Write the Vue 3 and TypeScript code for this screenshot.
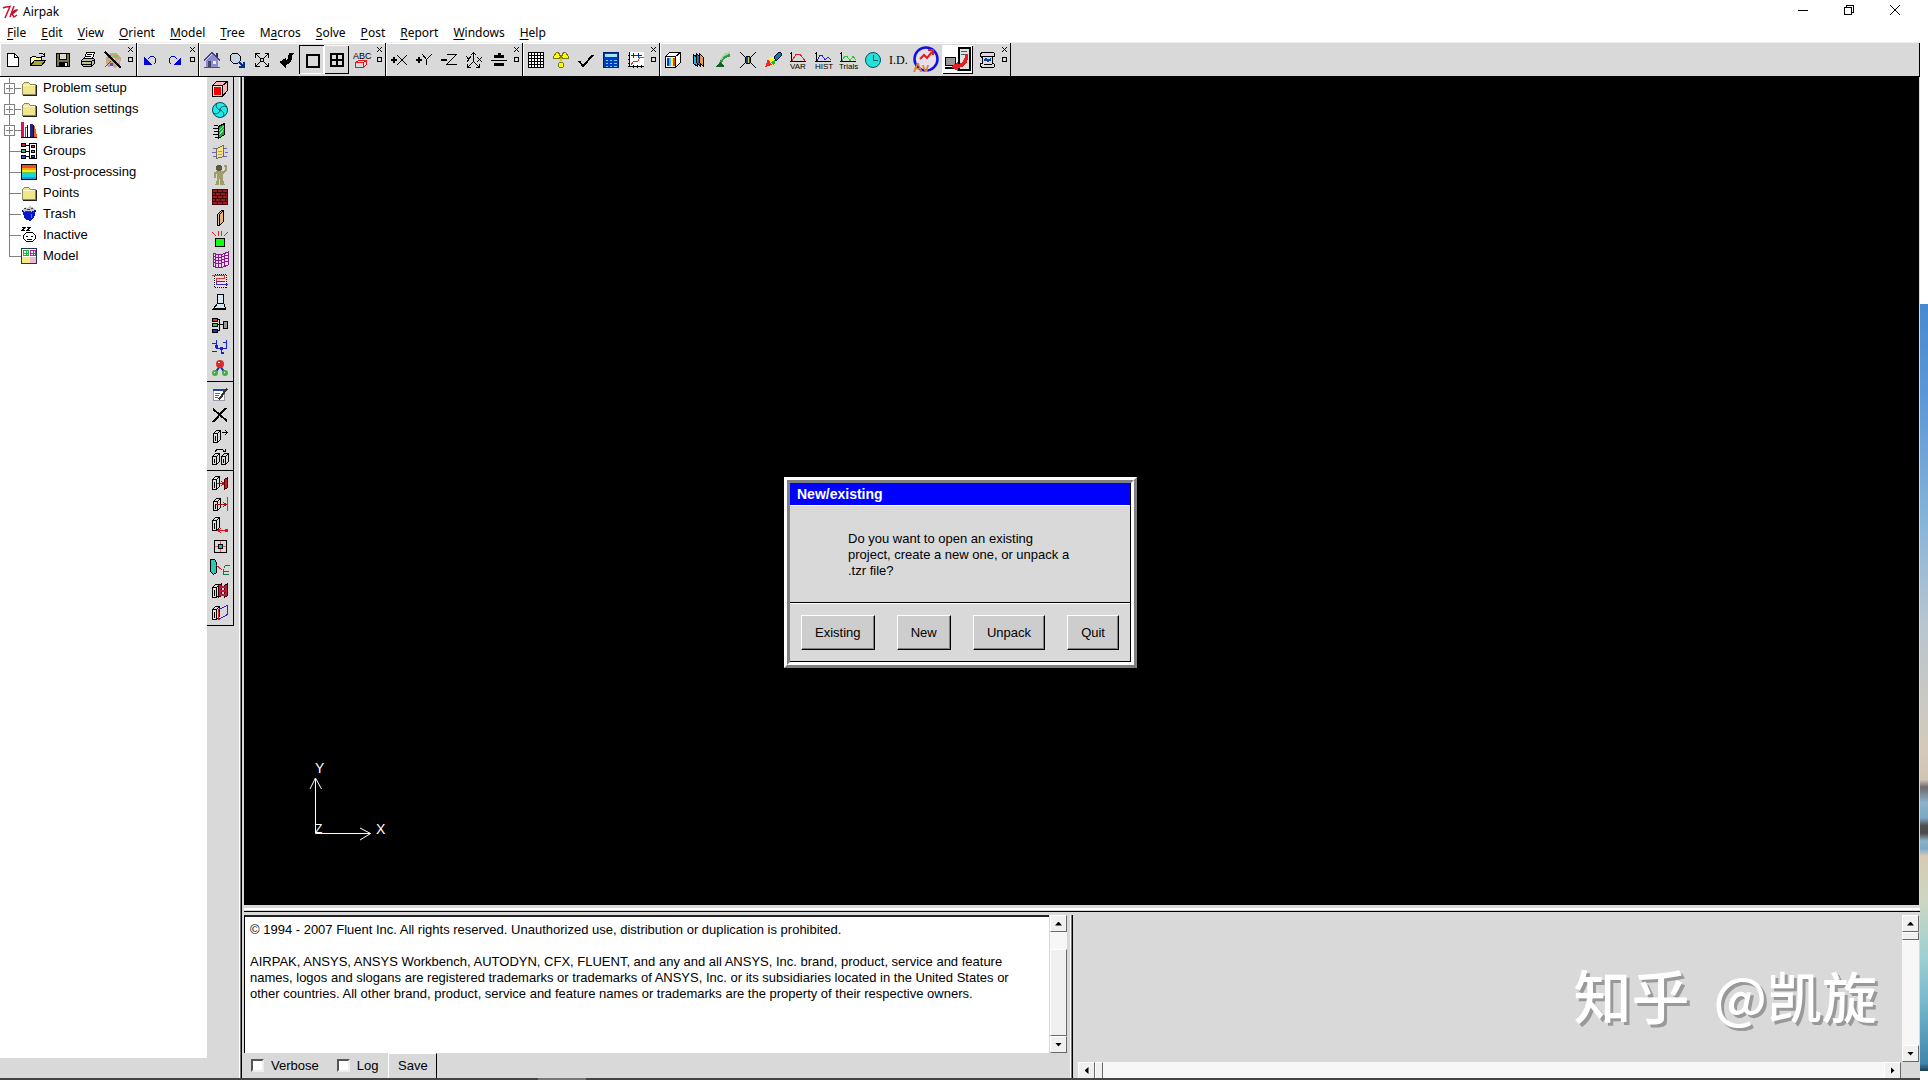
<script setup lang="ts">
import { ref } from 'vue'

interface Tool {
  icon: string
  label: string
  kind?: 'sunken' | 'raised' | 'logo' | 'device'
}

interface TreeNode {
  icon: string
  label: string
  expandable?: boolean
}

interface SideTool {
  icon: string
  label: string
  tall?: boolean
}

const cabinet = (x: number, y: number, w: number, h: number): string =>
  `<path d="M${x}.5 ${y + 3}.5l3 -3h${w - 5}v${h - 4}l-3 3h-${w - 5}z" fill="#ddd" stroke="#000"/><path d="M${x}.5 ${y + 3}.5h${w - 5}v${h - 4}M${x + w - 5}.5 ${y + 3}.5l3 -3" fill="none" stroke="#000"/><path d="M${x + 2}.5 ${y + 6}v${h - 8}" stroke="#000"/>`

const icons: Record<string, string> = {
  page: '<path d="M2.500 1.500h7l4 4v9h-11z" fill="#fff" stroke="#000"/><path d="M9.500 1.500v4h4" fill="none" stroke="#000"/>',
  open: '<path d="M.5 13.500v-8h1l1-1h3l1 1h5v3" fill="#ffff99" stroke="#000"/><path d="M.5 13.500l4-5h11l-4 5z" fill="#a5a534" stroke="#000"/><path d="M8.500 2.500l1-1h3l2 2M14.500 1v3.500h-4" fill="none" stroke="#000"/>',
  save: '<path d="M1.500 1.500h13v13h-13z" fill="#77773c" stroke="#000"/><path d="M4.500 1.500h7v6h-7z" fill="#d9d9d9" stroke="#000"/><path d="M4 10h9v5H4z" fill="#000"/><path d="M10 11h2v3h-2z" fill="#eee"/>',
  print: '<path d="M4.500 6.500l2-6h8l-2 6" fill="#fff" stroke="#000"/><path d="M7 2.500h5M6 4.500h5" stroke="#000"/><path d="M1.500 8.500l2-2h10l1 1v4l-3 3h-8l-2-2z" fill="#bbb" stroke="#000"/><path d="M1 9.500h10.500v5M11.500 9.500l3-2M2 12.500h9" fill="none" stroke="#000"/><path d="M8 10h2v1H8z" fill="#cc0"/>',
  palette: '<path d="M1 5l4-4h7l4 5-1 7-5 3-3-2-4 1-2-4z" fill="#c8ab7c"/><path d="M3 3h3v3H3z" fill="#e22"/><path d="M9 3h4v3H9z" fill="#6c6"/><path d="M11 8h4v3h-4z" fill="#d6b1d0"/><path d="M5 11h3v3H5z" fill="#54c"/><path d="M7 6h3v3H7z" fill="#ed5"/><path d="M0 0l16 16" stroke="#000" stroke-width="1.500"/><path d="M0 15l6-6" stroke="#a33"/>',
  undo: '<path d="M2 5v8h8z" fill="#0000dc"/><path d="M5.500 7.500l3-3h3l2 2v4l-2 2" fill="none" stroke="#0000dc"/>',
  redo: '<path d="M14 5v8H6z" fill="#0000dc"/><path d="M10.500 7.500l-3-3h-3l-2 2v4l2 2" fill="none" stroke="#0000dc"/>',
  home: '<path d="M2 8v7h12V8L8 2z" fill="#8b8bd0"/><path d="M0 8.500l8-8 8 8" fill="none" stroke="#44447a" stroke-width="2"/><path d="M12 1h2v4h-2z" fill="#334"/><path d="M4 9h3v6H4z" fill="#446"/><path d="M9 9h3v3H9z" fill="#eef"/><path d="M0 15.500h16" stroke="#464"/>',
  zoom: '<path d="M3.500 1.500h5l3 3v4l-3 3h-4l-3-3v-5z" fill="#c9d4e2" stroke="#000"/><path d="M10 10l5 5M15 10v5h-5" fill="none" stroke="#003080" stroke-width="2"/>',
  fit: '<path d="M1.500 5.500v-4h4M10.500 1.500h4v4M14.500 10.500v4h-4M5.500 14.500h-4v-4M2 2l4 4M14 2l-4 4M14 14l-4-4M2 14l4-4" fill="none" stroke="#000"/><path d="M6.500 6.500h3v3h-3z" fill="none" stroke="#000"/>',
  rotate: '<path d="M16 1c-2 0-3 1-3 3 0 5-2 8-6 9v3L0 10l7-4v3c2-1 2-3 2-5 0-3 3-4 7-3z" fill="#000"/>',
  single: '<path d="M3 3h12v12H3z" fill="none" stroke="#000" stroke-width="2"/>',
  quad: '<path d="M2 2h12v12H2zM8 2v12M2 8h12" fill="none" stroke="#000" stroke-width="2"/>',
  abc: '<text x="-1" y="7" font-family="Liberation Sans" font-size="9">ABC</text><path d="M1.500 10.500h8v5h-8zM1.500 10.500l3-2h8l-3 2M12.500 8.500v4l-3 3" fill="none" stroke="#e01818"/>',
  px: '<path d="M0 8h6M3 5v6" stroke="#000" stroke-width="2"/><path d="M6 3l10 10M16 3L6 13" stroke="#000"/>',
  py: '<path d="M0 8h6M3 5v6" stroke="#000" stroke-width="2"/><path d="M6.500 2.500l4 5v5M15.500 2.500l-5 5" fill="none" stroke="#000"/>',
  mz: '<path d="M0 8h6" stroke="#000" stroke-width="2"/><path d="M6 2.500h9.500l-10 10H16" fill="none" stroke="#000"/>',
  iso: '<path d="M7.500 9.500v-9M5 3l2.500-2.500L10 3M7.500 9.500l6 6M13.500 12v3.500H10M7.500 9.500l-6 6M1.500 12v3.500H5M0 4l2.500 3M5 4L1 10M11 5l5 5M16 5l-5 5" fill="none" stroke="#000"/>',
  flip: '<path d="M0 8.500h16" stroke="#000"/><path d="M3 3h4V1h3v2h3v3H3zM3 11h10v3H3z" fill="#000"/>',
  grid: '<path d="M0 0h16v16H0z" fill="#fff"/><path d="M.5.5h15v15H.5zM3.500 0v16M6.500 0v16M9.500 0v16M12.500 0v16M0 3.500h16M0 6.500h16M0 9.500h16M0 12.500h16" fill="none" stroke="#000"/>',
  radiation: '<path d="M.5 6.500v-2l3-4h2l2 4-1 2zM15.500 6.500v-2l-3-4h-2l-2 4 1 2zM5.500 14.500v-3l1-1h3l1 1v3l-1 1h-3z" fill="#ff0" stroke="#77771a"/><path d="M7 6h2v3H7z" fill="#cc0"/>',
  check: '<path d="M1 9l4 5L15 3" fill="none" stroke="#000" stroke-width="2"/>',
  calc: '<path d="M.5.5h15v15H.5z" fill="#003cbd" stroke="#001e70"/><path d="M2 2h12v3H2z" fill="#9fe6ff"/><path d="M3 8h2M7 8h2M3 11h2M7 11h2M3 14h2M7 14h2M11 14h3M11 11h3M11 8h3" stroke="#65dcff"/>',
  chart: '<path d="M1 0h15v15H1z" fill="#fff"/><path d="M1.500 0v15M0 14.500h16M0 3.500h2M0 7.500h2M0 11.500h2M5.500 13v3M9.500 13v3M13.500 13v3" stroke="#000"/><path d="M3 13l3-4h4l2-4h4" fill="none" stroke="#e32"/><path d="M3 3.500h11M5.500 1v5M10.500 1v5" stroke="#0029a8"/>',
  spectrum: '<path d="M.5 4.500l4-4h11v10l-5 5H.5z" fill="#fff" stroke="#000"/><path d="M.5 4.500h10v11M10.500 4.500l5-4" fill="none" stroke="#000"/><path d="M2 6h2v8H2z" fill="#13c"/><path d="M4 6h2v8H4z" fill="#37c6e9"/><path d="M6 6h2v8H6z" fill="#ff0"/><path d="M8 6h2v8H8z" fill="#f30"/>',
  planes: '<path d="M3.500 2.500l4 3v9l-4-3z" fill="#2ab5ce" stroke="#000"/><path d="M6.500 1.500l4 4v9l-4-4z" fill="#3a63c3" stroke="#000"/><path d="M9.500 1.500l4 4v9l-4-4z" fill="#eb9d43" stroke="#000"/>',
  particle: '<path d="M4 11C5 6 8 3 15 1v4c-4 0-7 2-8 6z" fill="#2f9b46"/><path d="M15 1c-5 1-8 3-9 7" fill="none" stroke="#a4d3a6" stroke-width="2"/><path d="M1 15l4-5 5 4-3 1z" fill="#106026"/>',
  probe: '<path d="M0 0l6 6M16 0l-6 6M0 16l6-6M16 16l-6-6" stroke="#000"/><path d="M6.500 4.500h3l1 1v5l-1 1h-3l-1-1v-5z" fill="#1a4080" stroke="#000"/><path d="M8 5h1v6H8z" fill="#cfe146"/>',
  paint: '<path d="M0 15l3-8 4 6z" fill="#f22"/><path d="M4 6l5-2 3 4-5 5z" fill="#ff2"/><path d="M6 10l4-2v4l-2 1z" fill="#1b3"/><path d="M9 5l5-5 2 1v3l-5 5z" fill="#157c8c" stroke="#004"/>',
  var: '<path d="M1.500 0v10M0 9.500h16M0 1.500h2" stroke="#000"/><path d="M2 9l4-7h4l5 7" fill="none" stroke="#d22"/><text x="0" y="17" font-family="Liberation Sans" font-size="8">VAR</text>',
  hist: '<path d="M1.500 0v10M0 9.500h16M0 1.500h2" stroke="#000"/><path d="M2 9l3-6h2l3 5 3-3 3 3" fill="none" stroke="#22d"/><text x="0" y="17" font-family="Liberation Sans" font-size="8">HIST</text>',
  trials: '<path d="M1.500 0v10M0 9.500h16M0 1.500h2" stroke="#000"/><path d="M2 9l3-5h2l3 5 3-5 3 4" fill="none" stroke="#2dc83b"/><text x="-1" y="17" font-family="Liberation Sans" font-size="8">Trials</text>',
  clock: '<circle cx="8" cy="8" r="7.500" fill="#27e0dc" stroke="#055"/><path d="M8.500 3v5.500H13" fill="none" stroke="#055"/>',
  id: '<text x="-1" y="12" font-family="Liberation Serif" font-size="12">I.D.</text>',
  airflow: '<circle cx="15" cy="14" r="11.500" fill="#e7e0e9" stroke="#1111e5" stroke-width="2.500"/><path d="M9 14l4-4 3 3 5-6M22 10V5h-5" fill="none" stroke="#e11e1e" stroke-width="2"/><text x="2" y="27" font-family="Liberation Sans" font-weight="bold" font-size="13" fill="#d9803f">Av</text>',
  device: '<path d="M15.500 2.500h11v22h-11z" fill="#d9e6e3" stroke="#000" stroke-width="2"/><path d="M18 6.500h6M18 9.500h6" stroke="#555"/><path d="M2.500 12.500h10v8h-10z" fill="#999" stroke="#000"/><path d="M2 23h10" stroke="#000" stroke-width="2"/><path d="M22 9h3c1 8-3 14-10 14v3l-7-4 7-5v2c4 0 7-4 7-10z" fill="#e51e20"/>',
  script: '<path d="M3.500.5h11l1 1v3h-2v7h1l1 1v2l-1 1h-11l-2-1v-3h2v-6l-2-1v-3z" fill="#ddd" stroke="#000"/><path d="M3 4.500h10M5 12.500h8" stroke="#000"/><path d="M5 9l2-2 2 2 3-2" fill="none" stroke="#14a" stroke-width="2"/>',
  folder: '<path d="M1.500 4.500l2-2h4l2 2h5v10h-13z" fill="#f0e68c" stroke="#8d875a"/><path d="M2 5.500h12" stroke="#fffbd0"/><path d="M15.500 5v10.500H2" fill="none" stroke="#222"/>',
  books: '<path d="M0 0h3v16H0z" fill="#e0105a"/><path d="M4 5h2v10H4z" fill="#fff" stroke="#b12745"/><path d="M7 3h2v12H7z" fill="#fff"/><path d="M9 2h3v13H9z" fill="#228"/><path d="M12 3l2 1 2 11h-3z" fill="#e86020"/><path d="M6.500 3v12M12.500 3v12M0 15.500h16" stroke="#200"/>',
  groups: '<path d="M8.500 15.500v-15h7v15zM5 2.500h4M5 8.500h4M5 13.500h4" fill="none" stroke="#000"/><path d="M.5.5h4v3h-4z" fill="#c24" stroke="#000"/><path d="M.5 6.500h4v3h-4z" fill="#3b8" stroke="#000"/><path d="M.5 12.500h4v3h-4z" fill="#35c" stroke="#000"/><path d="M10.500 2.500h3v2h-3z" fill="#c24" stroke="#000"/><path d="M10.500 7.500h3v2h-3z" fill="#3b8" stroke="#000"/><path d="M10.500 12.500h3v2h-3z" fill="#35c" stroke="#000"/>',
  rainbow: '<path d="M0 0h16v16H0z"/><path d="M1 1h14v3H1z" fill="#f04b28"/><path d="M1 4h14v2H1z" fill="#f9a51a"/><path d="M1 6h14v2H1z" fill="#f5e91e"/><path d="M1 8h14v2H1z" fill="#65ca40"/><path d="M1 10h14v3H1z" fill="#18d5e4"/><path d="M1 13h14v2H1z" fill="#199be8"/>',
  trash: '<path d="M1 4h14l-2 8-4 3-5-2z" fill="#0716cf"/><path d="M1 4l3-3 2 1 2-2 3 1 3 3-4 2H4z" fill="#c4c4c4"/><path d="M3 2.500h2M6 3.500h3M10 2.500h2M4 5.500h6" stroke="#444"/><path d="M10.500 8v4" stroke="#4a78ff"/>',
  sleep: '<path d="M5.500 5.500h6l3 3v3l-3 3h-6l-3-3v-3z" fill="#fff" stroke="#000"/><path d="M1 .5h3L1 3.500h3M6 .5h3L6 3.500h3M5 9.500h2M10 9.500h2M6 12.500h5" fill="none" stroke="#000"/>',
  model: '<path d="M.5.5h15v15H.5z" fill="#fff" stroke="#235"/><path d="M1 9h8v6H1z" fill="#f4ea7e"/><path d="M9 9h6v6H9z" fill="#f5b6ce"/><circle cx="5" cy="5" r="3" fill="#e0ffe2" stroke="#1bb633"/><path d="M3 5.500h4M5.500 3v4" stroke="#1bb633"/><path d="M9.500 2.500h5v5h-5zM12.500 2v6M10 5.500h5" fill="#fff" stroke="#b01dc1"/>',
  block: '<path d="M.5 4.500l4-4h11v9l-5 6H.5z" fill="#f9b6b6" stroke="#000"/><path d="M.5 4.500h10v11H.5zM10.500 4.500l5-4" fill="#ddd" stroke="#000"/><path d="M2 6h7v8H2z" fill="#f00000"/>',
  fan: '<circle cx="8" cy="8" r="7.500" fill="#1deced" stroke="#064b50"/><path d="M8 8C5 7 3 4 5 1M8 8c0-3 4-5 7-3M8 8c3 1 5 4 3 7M8 8c0 3-4 5-7 3" fill="none" stroke="#064b50"/>',
  vent: '<path d="M6.500 3.500l6-3v11l-6 4z" fill="#20a43b" stroke="#000"/><path d="M7 8l5-5M7 12l5-6" stroke="#8e8"/><path d="M2 2.500h4M1 5.500h6M2 8.500h5M1 11.500h6M3 14.500h4" stroke="#000"/>',
  opening: '<path d="M4.500 4.500l7-3v11l-7 2z" fill="#f3e585" stroke="#765"/><path d="M1 4.500h3M0 8.500h4M1 12.500h3M12 4.500h3M13 8.500h3M12 12.500h3" stroke="#6b65bd"/><path d="M6 7.500h4M6 10.500h4" stroke="#a98"/>',
  person: '<circle cx="7" cy="1" r="3" fill="#5c5939"/><path d="M5 4h6l2-2-1-4h3v6l-4 3v4l1 6h1v1H8v-6H7v6H3v-1h1l1-6V7H4v4H2V5z" fill="#a09c6c"/>',
  wall: '<path d="M0 0h16v16H0z" fill="#9b1d20"/><path d="M0 .5h16M0 3.500h16M0 6.500h16M0 9.500h16M0 12.500h16M0 15.500h16M.5 0v16M15.500 0v16M5.500 0v3M10.500 0v3M3.500 3v3M8.500 3v3M13 3v3M5.500 6v3M10.500 6v3M3.500 9v3M8.500 9v3M13 9v3M5.500 12v3M10.500 12v3" stroke="#3a0a0c"/>',
  plate: '<path d="M5.500 4.500l4-4h2v11l-4 4h-2z" fill="#d5cca5" stroke="#000"/><path d="M7.500 4.500l4-4v11l-4 4z" fill="#f4b568" stroke="#000"/>',
  source: '<path d="M3.500 7.500h9v8h-9z" fill="#1f1" stroke="#000"/><path d="M6.500 0v5M9.500 0v5M0 1l4 4M16 1l-4 4" stroke="#e32222"/>',
  mesh: '<path d="M1 1l5 2 5-1 5-2v13l-5 2-5 1-5-2z" fill="#ecd7ee" stroke="#87178f"/><path d="M3.500 2v13M6.500 3v12M9.500 3v12M12.500 1v14M1 4l5 2 10-3M1 7l5 2 10-3M1 10l5 2 10-3" fill="none" stroke="#87178f"/>',
  exchanger: '<path d="M2.500 1.500h12v13h-12z" fill="#f6dcdc" stroke="#000" stroke-dasharray="1 1"/><path d="M0 2.500h12.500v3h-8v3h8" fill="none" stroke="#df3636"/><path d="M12.500 8.500h-8v3H16" fill="none" stroke="#3a2bcf"/>',
  hood: '<path d="M5.500.5h6v8l2 6H1.500l4-5z" fill="#d5ebf3" stroke="#000"/><path d="M5.500 9.500h6v-8M0 15.500h14" fill="none" stroke="#000"/>',
  network: '<path d="M5 2.500h2.500v11H5M5 7.500h6" fill="none" stroke="#000"/><path d="M.5 1.500h5v3h-5z" fill="#d33" stroke="#000"/><path d="M.5 6.500h5v3h-5z" fill="#3c5" stroke="#000"/><path d="M.5 12.500h5v3h-5z" fill="#239" stroke="#000"/><path d="M11.500 4.500h4v7h-4z" fill="#999" stroke="#000"/>',
  wiring: '<path d="M0 4.500h4.500v5H14M4.500 1v4M9.500 9v6M14.500 1v9M0 12.500h5M11 3.500h4" fill="none" stroke="#1723d3"/><path d="M3 6h3v3H3zM8 8h3v3H8zM9 13h3v2H9z" fill="#1723d3"/>',
  assembly: '<path d="M8 6l-5 7M8 6l5 7" stroke="#1a2c9b" stroke-width="2"/><circle cx="8" cy="4" r="4" fill="#dc2929"/><circle cx="3" cy="13" r="3" fill="#3db344"/><circle cx="13" cy="13" r="3" fill="#3db344"/><path d="M6 2.500h2M2 12.500h1M12 12.500h1" stroke="#fff"/>',
  edit: '<path d="M1.500 3.500h11v11h-11z" fill="#fff" stroke="#99a"/><path d="M1 4h12" stroke="#25459b" stroke-width="2"/><path d="M3 7.500h5M3 9.500h4M3 11.500h3" stroke="#667"/><path d="M6 13l8-11 2 1-8 11z" fill="#333"/>',
  remove: '<path d="M1 2l14 12M14 1L1 15" stroke="#000" stroke-width="2"/>',
  move: cabinet(1, 2, 9, 13) + '<path d="M10 4.500h6M13 2l2.500 2.500L13 7" fill="none" stroke="#000"/>',
  copy: cabinet(0, 4, 9, 12) + cabinet(9, 4, 9, 12) + '<path d="M3 2.500l2-2h5l3 2M13.500 0v2.500H11" fill="none" stroke="#000"/>',
  alignface: cabinet(0, 1, 9, 14) + '<path d="M12.500 4.500l3-2v10l-3 2z" fill="#c02020" stroke="#500"/><path d="M5 8.500h7M9 6l3 2.500L9 11" fill="none" stroke="#a11"/>',
  alignedge: cabinet(1, 2, 9, 13) + '<path d="M15.500 1v14" stroke="#e22"/><path d="M4 8.500h10M11 6l3 2.500-3 2.500" fill="none" stroke="#a11"/>',
  alignvertex: cabinet(0, 0, 9, 14) + '<path d="M6 13.500h8M9 11l-3 2.500L9 16" stroke="#d11" fill="none"/><path d="M13 12h3v3h-3z" fill="#d11"/>',
  center: '<path d="M2.500 2.500h12v12h-12z" fill="none" stroke="#000"/><path d="M8.500 3v11M3 8.500h11" stroke="#e55"/><path d="M6.500 6.500h4v4h-4z" fill="#21bcb8" stroke="#000"/>',
  match: '<path d="M-1.500.5h4l2 3v10l-3 2-3-3z" fill="#2cc7b5" stroke="#000"/><path d="M4 6l6 5M6 7l3 3" stroke="#e22"/><path d="M11.500 9.500l2-3h4M11.500 9.500v6h5M12 12.500h5" fill="none" stroke="#174"/>',
  morphface: cabinet(0, 2, 9, 14) + '<path d="M6.500 3.500l3-2v12l-3 2zM12.500 3.500l3-2v12l-3 2z" fill="#bf1845" stroke="#300"/><path d="M9 4.500h4M9 8.500h4M9 12.500h4" stroke="#bf1845" stroke-width="2"/>',
  morphedge: cabinet(0, 2, 9, 14) + '<path d="M6.500 5.500l9-4v9l-9 5z" fill="none" stroke="#2b24cc"/><path d="M6.500 6v9" stroke="#e22"/>',
}

const menus: string[] = [
  'File', 'Edit', 'View', 'Orient', 'Model', 'Tree', 'Macros', 'Solve', 'Post', 'Report', 'Windows', 'Help',
]
const mnemonics: Record<string, number> = { Macros: 1 }
const splitLabel = (label: string): [string, string, string] => {
  const at = mnemonics[label] ?? 0
  return [label.slice(0, at), label[at], label.slice(at + 1)]
}

const toolGroups: Tool[][] = [
  [
    { icon: 'page', label: 'New project' },
    { icon: 'open', label: 'Open project' },
    { icon: 'save', label: 'Save project' },
    { icon: 'print', label: 'Print screen' },
    { icon: 'palette', label: 'Create image file' },
  ],
  [
    { icon: 'undo', label: 'Undo' },
    { icon: 'redo', label: 'Redo' },
  ],
  [
    { icon: 'home', label: 'Home position' },
    { icon: 'zoom', label: 'Zoom in' },
    { icon: 'fit', label: 'Scale to fit' },
    { icon: 'rotate', label: 'Rotate' },
    { icon: 'single', label: 'One viewing window', kind: 'sunken' },
    { icon: 'quad', label: 'Four viewing windows', kind: 'raised' },
    { icon: 'abc', label: 'Display object names' },
  ],
  [
    { icon: 'px', label: 'View +X' },
    { icon: 'py', label: 'View +Y' },
    { icon: 'mz', label: 'View -Z' },
    { icon: 'iso', label: 'Isometric view' },
    { icon: 'flip', label: 'Reverse orientation' },
  ],
  [
    { icon: 'grid', label: 'Generate mesh' },
    { icon: 'radiation', label: 'Radiation' },
    { icon: 'check', label: 'Check model' },
    { icon: 'calc', label: 'Run solution' },
    { icon: 'chart', label: 'Run optimization' },
  ],
  [
    { icon: 'spectrum', label: 'Object face' },
    { icon: 'planes', label: 'Plane cut' },
    { icon: 'particle', label: 'Isosurface' },
    { icon: 'probe', label: 'Point' },
    { icon: 'paint', label: 'Surface probe' },
    { icon: 'var', label: 'Variation plot' },
    { icon: 'hist', label: 'History plot' },
    { icon: 'trials', label: 'Trials plot' },
    { icon: 'clock', label: 'Transient settings' },
    { icon: 'id', label: 'Load solution ID' },
    { icon: 'airflow', label: 'Airflow', kind: 'logo' },
    { icon: 'device', label: 'Export', kind: 'device' },
    { icon: 'script', label: 'Summary report' },
  ],
]

const tree: TreeNode[] = [
  { icon: 'folder', label: 'Problem setup', expandable: true },
  { icon: 'folder', label: 'Solution settings', expandable: true },
  { icon: 'books', label: 'Libraries', expandable: true },
  { icon: 'groups', label: 'Groups' },
  { icon: 'rainbow', label: 'Post-processing' },
  { icon: 'folder', label: 'Points' },
  { icon: 'trash', label: 'Trash' },
  { icon: 'sleep', label: 'Inactive' },
  { icon: 'model', label: 'Model' },
]

const sideGroups: SideTool[][] = [
  [
    { icon: 'block', label: 'Block' },
    { icon: 'fan', label: 'Fan' },
    { icon: 'vent', label: 'Vent' },
    { icon: 'opening', label: 'Opening' },
    { icon: 'person', label: 'Person', tall: true },
    { icon: 'wall', label: 'Wall' },
    { icon: 'plate', label: 'Partition' },
    { icon: 'source', label: 'Source' },
    { icon: 'mesh', label: 'Resistance' },
    { icon: 'exchanger', label: 'Heat exchanger' },
    { icon: 'hood', label: 'Hood' },
    { icon: 'network', label: 'Network', tall: true },
    { icon: 'wiring', label: 'Wire' },
    { icon: 'assembly', label: 'Assembly' },
  ],
  [
    { icon: 'edit', label: 'Edit object' },
    { icon: 'remove', label: 'Delete object' },
    { icon: 'move', label: 'Move object' },
    { icon: 'copy', label: 'Copy object' },
  ],
  [
    { icon: 'alignface', label: 'Align faces' },
    { icon: 'alignedge', label: 'Align edges' },
    { icon: 'alignvertex', label: 'Align vertices' },
    { icon: 'center', label: 'Align centers' },
    { icon: 'match', label: 'Match faces' },
    { icon: 'morphface', label: 'Morph faces', tall: true },
    { icon: 'morphedge', label: 'Morph edges' },
  ],
]

const message = `© 1994 - 2007 Fluent Inc. All rights reserved. Unauthorized use, distribution or duplication is prohibited.

AIRPAK, ANSYS, ANSYS Workbench, AUTODYN, CFX, FLUENT, and any and all ANSYS, Inc. brand, product, service and feature
names, logos and slogans are registered trademarks or trademarks of ANSYS, Inc. or its subsidiaries located in the United States or
other countries. All other brand, product, service and feature names or trademarks are the property of their respective owners.`

const question = `Do you want to open an existing
project, create a new one, or unpack a
.tzr file?`
const answers: string[] = ['Existing', 'New', 'Unpack', 'Quit']

const verbose = ref(false)
const log = ref(false)
</script>

<template>
  <div class="desktop">
    <div class="window">
      <header class="titlebar">
        <svg class="logo" viewBox="0 0 16 14" aria-hidden="true">
          <path d="M0 3c2-1 4-1 7-1.500L2 13M11 1L7 12M9 9c2-1 4-2 5-4-2 0-4 2-5 4l2 3 3-2" fill="none" stroke="#c8102e" stroke-width="1.500" />
        </svg>
        <span class="title">Airpak</span>
        <div class="controls">
          <button type="button" aria-label="Minimize">
            <svg viewBox="0 0 12 12"><path d="M1 6.500h10" stroke="#000" /></svg>
          </button>
          <button type="button" aria-label="Restore">
            <svg viewBox="0 0 12 12"><path d="M1.500 3.500h7v7h-7zM3.500 3V1.500h7v7H9" fill="none" stroke="#000" /></svg>
          </button>
          <button type="button" aria-label="Close">
            <svg class="smooth" viewBox="0 0 12 12"><path d="M1 1l10 10M11 1L1 11" stroke="#000" /></svg>
          </button>
        </div>
      </header>

      <nav class="menubar">
        <button v-for="m in menus" :key="m" type="button">{{ splitLabel(m)[0] }}<u>{{ splitLabel(m)[1] }}</u>{{ splitLabel(m)[2] }}</button>
      </nav>

      <div class="toolbar">
        <div v-for="(group, g) in toolGroups" :key="g" class="group">
          <button v-for="t in group" :key="t.icon" type="button" class="tool" :class="t.kind" :aria-label="t.label">
            <svg v-if="t.kind === 'logo' || t.kind === 'device'" class="big" viewBox="0 0 28 28" v-html="icons[t.icon]" />
            <svg v-else :class="{ smooth: t.icon === 'clock' }" viewBox="0 0 16 16" v-html="icons[t.icon]" />
          </button>
          <div class="dock">
            <button type="button" aria-label="Close toolbar"><svg viewBox="0 0 5 5"><path d="M0 0l5 5M5 0L0 5" stroke="#000" /></svg></button>
            <button type="button" aria-label="Detach toolbar"><svg viewBox="0 0 5 5"><path d="M.5.5h4v4h-4z" fill="none" stroke="#000" /></svg></button>
          </div>
        </div>
      </div>

      <div class="main">
        <aside class="left">
          <ul class="tree">
            <li v-for="n in tree" :key="n.label">
              <span class="branch"><span v-if="n.expandable" class="plus" /></span>
              <svg viewBox="0 0 16 16" v-html="icons[n.icon]" />
              <span>{{ n.label }}</span>
            </li>
          </ul>
          <div class="sidebar">
            <div v-for="(group, g) in sideGroups" :key="g" class="sidegroup">
              <button v-for="t in group" :key="t.icon" type="button" :class="{ tall: t.tall }" :aria-label="t.label">
                <svg :class="{ smooth: t.icon === 'fan' || t.icon === 'assembly' }" viewBox="0 0 16 16" v-html="icons[t.icon]" />
              </button>
            </div>
          </div>
        </aside>
        <div class="vsash" />

        <div class="right">
          <main class="viewport">
            <svg class="axes" viewBox="0 0 80 84" aria-label="Axes">
              <path d="M5.500 17v55.500h55M0 28l5.500-11 6 11M50 67l10.500 5.500L50 79" fill="none" stroke="#fff" />
              <text x="5" y="12">Y</text>
              <text x="66" y="73">X</text>
              <text class="z" x="5" y="72">Z</text>
            </svg>
          </main>
          <div class="hsash" />
          <div class="bottom">
            <section class="messages">
              <div class="logrow">
                <div class="logtext">{{ message }}</div>
                <div class="vscroll">
                  <button type="button" aria-label="Scroll up"><i class="up" /></button>
                  <div class="track end"><div class="thumb" /></div>
                  <button type="button" aria-label="Scroll down"><i class="down" /></button>
                </div>
              </div>
              <div class="options">
                <label><input v-model="verbose" type="checkbox" />Verbose</label>
                <label><input v-model="log" type="checkbox" />Log</label>
                <button type="button" class="savelog">Save</button>
              </div>
            </section>
            <div class="vsash" />
            <section class="editor">
              <div class="editrow">
                <div class="pane"><span class="signature"><span class="site">知乎</span><span>@凯旋</span></span></div>
                <div class="vscroll">
                  <button type="button" aria-label="Scroll up"><i class="up" /></button>
                  <div class="track"><div class="thumb small" /></div>
                  <button type="button" aria-label="Scroll down"><i class="down" /></button>
                </div>
              </div>
              <div class="hscroll">
                <button type="button" aria-label="Scroll left"><i class="prev" /></button>
                <div class="track"><div class="thumb" /></div>
                <button type="button" aria-label="Scroll right"><i class="next" /></button>
              </div>
            </section>
          </div>
        </div>
      </div>

      <div class="taskbar"><span /></div>

      <div class="dialog" role="dialog" aria-label="New/existing">
        <div class="frame">
          <h1>New/existing</h1>
          <p>{{ question }}</p>
          <div class="answers">
            <button v-for="a in answers" :key="a" type="button">{{ a }}</button>
          </div>
        </div>
      </div>
    </div>
    <div class="wallpaper" />
  </div>
</template>

<style>
body {
  margin: 0;
  background: #fff;
}
</style>

<style scoped>
* {
  box-sizing: border-box;
}
.desktop {
  display: flex;
  height: 100vh;
  min-height: 720px;
  overflow: hidden;
  font: 13px/16px "Liberation Sans", Arial, sans-serif;
  color: #000;
}
button {
  font: inherit;
  color: inherit;
  padding: 0;
  border: 0;
  background: none;
}
svg {
  display: block;
  flex: none;
  width: 16px;
  height: 16px;
  overflow: visible;
  shape-rendering: crispEdges;
}
.smooth {
  shape-rendering: auto;
}
.window {
  position: relative;
  flex: 1;
  min-width: 0;
  display: flex;
  flex-direction: column;
}
.wallpaper {
  width: 8px;
  margin: 304px 0 9px;
  background: linear-gradient(#468ad2, #5a98d8 12%, #86b3da 28%, #b9c6cf 42%, #d5cabb 58%, #d0c5b5 62%, #6d6a70 63%, #8bb2c8 65%, #7da9c4 67%, #514f50 68%, #4a494c 69%, #8bb2c8 70%, #7da9c4 71%, #d8cbb5 72%, #cbd6c2 78%, #9fd0d2 85%, #76b9cd 91%, #3f86ae 99%, #203d50);
}

.titlebar {
  display: flex;
  align-items: center;
  height: 23px;
  padding-left: 3px;
}
.logo {
  width: 16px;
  height: 14px;
  shape-rendering: auto;
}
.title {
  margin-left: 4px;
  font: 12px/16px "Noto Sans", sans-serif;
}
.controls {
  display: flex;
  align-self: flex-start;
  margin-right: 2px;
  margin-left: auto;
}
.controls button {
  display: flex;
  align-items: center;
  justify-content: center;
  width: 46px;
  height: 20px;
}
.controls svg {
  width: 12px;
  height: 12px;
}
.menubar {
  display: flex;
  gap: 15px;
  height: 20px;
  padding-left: 7px;
  border-bottom: 1px solid #f0f0f0;
}
.menubar button {
  font: 12px/20px "Noto Sans", sans-serif;
}
.menubar u {
  text-underline-offset: 2px;
}

.toolbar {
  display: flex;
  height: 34px;
  background: #d9d9d9;
  border-bottom: 1px solid #000;
  border-right: 1px solid #000;
}
.group {
  display: flex;
  align-items: flex-start;
  padding-top: 2px;
  border-right: 1px solid #000;
  box-shadow: inset 1px 1px #fff;
}
.tool {
  width: 25px;
  height: 29px;
  padding: 7px 4px 6px 5px;
}
.tool.sunken {
  box-shadow: inset 1px 1px #000, inset -1px -1px #fff;
}
.tool.raised {
  box-shadow: inset 1px 1px #fff, inset -1px -1px #000;
}
.tool.logo {
  width: 31px;
  padding: 0 2px 1px 1px;
}
.tool.logo svg {
  shape-rendering: auto;
}
.tool.device {
  width: 31px;
  margin: 0 1px;
  padding: 0 2px 1px 1px;
  background: #fff;
  box-shadow: inset 1px 1px #fff, inset -1px -1px #000;
}
.big {
  width: 28px;
  height: 28px;
}
.dock {
  display: flex;
  flex-direction: column;
  align-items: center;
  gap: 5px;
  width: 11px;
  height: 28px;
  padding-top: 2px;
}
.dock svg {
  width: 5px;
  height: 5px;
}

.main {
  flex: 1;
  min-height: 0;
  display: flex;
  background: #d9d9d9;
}
.left {
  display: flex;
  width: 239px;
}
.tree {
  flex: 1;
  margin: 0 0 20px;
  padding: 1px 0 0 9px;
  list-style: none;
  background: #fff;
}
.tree li {
  position: relative;
  display: flex;
  align-items: center;
  height: 21px;
  padding-bottom: 1px;
}
.tree svg {
  margin-right: 6px;
}
.tree li::before {
  content: "";
  position: absolute;
  left: 0;
  top: 0;
  width: 1px;
  height: 21px;
  background: #808080;
}
.tree li:last-child::before {
  height: 11px;
}
.branch {
  position: relative;
  display: flex;
  align-items: center;
  width: 12px;
  height: 1px;
  background: #808080;
}
.plus {
  flex: none;
  width: 11px;
  height: 11px;
  margin-left: -5px;
  border: 1px solid #808080;
  background:
    linear-gradient(#808080, #808080) center / 7px 1px no-repeat,
    linear-gradient(#808080, #808080) center / 1px 7px no-repeat,
    #fff;
}
.sidebar {
  align-self: flex-start;
  width: 27px;
  margin-right: 5px;
  border-right: 1px solid #000;
  border-bottom: 1px solid #000;
}
.sidegroup {
  padding: 2px 0;
}
.sidegroup + .sidegroup {
  border-top: 1px solid #000;
}
.sidegroup button {
  display: block;
  width: 26px;
  height: 21px;
  padding: 2px 5px 3px;
}
.sidegroup button.tall {
  height: 24px;
  padding: 4px 5px;
}
.vsash {
  flex: none;
  width: 5px;
  border-left: 1px solid #fff;
  background: linear-gradient(90deg, #777 1px, #000 1px, #000 2px, #d9d9d9 2px);
}

.right {
  flex: 1;
  min-width: 0;
  display: flex;
  flex-direction: column;
}
.viewport {
  position: relative;
  flex: 1;
  margin-right: 1px;
  background: #000;
}
.axes {
  position: absolute;
  left: 66px;
  bottom: 60px;
  width: 80px;
  height: 84px;
  shape-rendering: auto;
}
.axes text {
  font: 14px "Liberation Sans", Arial, sans-serif;
  fill: #fff;
}
.axes .z {
  font-size: 12px;
}
.hsash {
  height: 10px;
  border-bottom: 3px solid #d9d9d9;
  background: linear-gradient(#d9d9d9 3px, #fff 3px, #fff 5px, #d9d9d9 5px, #d9d9d9 6px, #000 6px);
}
.bottom {
  display: flex;
  height: 163px;
  padding-right: 1px;
}
.messages {
  flex: none;
  display: flex;
  flex-direction: column;
  width: 826px;
  max-width: 60%;
}
.logrow {
  flex: 1;
  display: flex;
  padding-right: 3px;
}
.logtext {
  flex: 1;
  padding: 5px 0 0 5px;
  white-space: pre;
  overflow: hidden;
  background: #fff;
  border-top: 2px solid #222;
  border-left: 1px solid #000;
}
.vscroll {
  display: flex;
  flex-direction: column;
  width: 18px;
  padding-left: 1px;
}
.hscroll {
  display: flex;
  height: 16px;
  padding: 0 18px 0 3px;
}
.vscroll button,
.hscroll button,
.thumb {
  display: flex;
  align-items: center;
  justify-content: center;
  flex: none;
  width: 17px;
  height: 17px;
  background: #f0f0f0;
  border: 1px solid;
  border-color: #fff #696969 #696969 #fff;
}
.hscroll button,
.hscroll .thumb {
  height: 16px;
  border-bottom: 0;
}
.track {
  flex: 1;
  display: flex;
  background: #f7f7f7;
}
.track.end {
  align-items: flex-end;
}
.vscroll .thumb {
  height: 84%;
}
.vscroll .thumb.small {
  height: 8px;
}
.hscroll .thumb {
  width: 8px;
}
i {
  width: 7px;
  height: 4px;
  background: #000;
}
.up {
  clip-path: polygon(50% 0, 100% 100%, 0 100%);
}
.down {
  clip-path: polygon(0 0, 100% 0, 50% 100%);
}
.prev,
.next {
  width: 4px;
  height: 7px;
}
.prev {
  clip-path: polygon(100% 0, 100% 100%, 0 50%);
}
.next {
  clip-path: polygon(0 0, 100% 50%, 0 100%);
}
.options {
  display: flex;
  align-items: center;
  height: 25px;
  padding-left: 7px;
}
.options label {
  display: flex;
  align-items: center;
  gap: 7px;
  margin-right: 18px;
}
.options label + label {
  margin-right: 10px;
}
.options input {
  appearance: none;
  width: 13px;
  height: 13px;
  margin: 0;
  background: #fff;
  border: 2px solid;
  border-color: #555 #eee #eee #555;
}
.savelog {
  width: 49px;
  height: 25px;
  border-top: 1px solid #fff;
  border-left: 1px solid #fff;
  border-right: 1px solid #000;
}
.editor {
  flex: 1;
  min-width: 0;
  display: flex;
  flex-direction: column;
}
.editrow {
  flex: 1;
  display: flex;
}
.pane {
  flex: 1;
  display: flex;
  align-items: center;
  justify-content: flex-end;
  padding: 10px 24px 0 0;
}
.signature {
  display: flex;
  align-items: center;
  gap: 24px;
  font: 500 55px/60px "Noto Sans CJK SC", sans-serif;
  color: #fff;
  text-shadow: 3px 3px #999;
  white-space: nowrap;
}
.site {
  font-size: 58px;
}
.taskbar {
  height: 2px;
  background: #444;
}
.taskbar span {
  display: block;
  width: 48px;
  height: 2px;
  margin-left: 28%;
  background: #777;
}

.dialog {
  position: absolute;
  top: 477px;
  left: calc(50% - 176px);
  width: 353px;
  border: 3px solid;
  border-color: #fff #808080 #808080 #fff;
  background: #d9d9d9;
}
.frame {
  border: 3px solid;
  border-color: #808080 #fff #fff #808080;
  box-shadow: inset -1px -1px #000;
}
.dialog h1 {
  margin: 0 1px 0 0;
  padding-left: 7px;
  font: bold 14px/22px "Liberation Sans", Arial, sans-serif;
  color: #fff;
  background: #00f;
}
.dialog p {
  margin: 0 1px 0 0;
  padding: 25px 0 23px 58px;
  white-space: pre;
  border-top: 1px solid #fff;
  border-bottom: 1px solid #000;
}
.answers {
  display: flex;
  justify-content: space-between;
  margin-right: 1px;
  padding: 11px 11px 12px;
  border-top: 1px solid #fff;
}
.answers button {
  height: 35px;
  padding: 0 13px;
  background: #cdcdcd;
  border: 1px solid;
  border-color: #fff #000 #000 #fff;
  box-shadow: inset -1px -1px #808080;
}
</style>
